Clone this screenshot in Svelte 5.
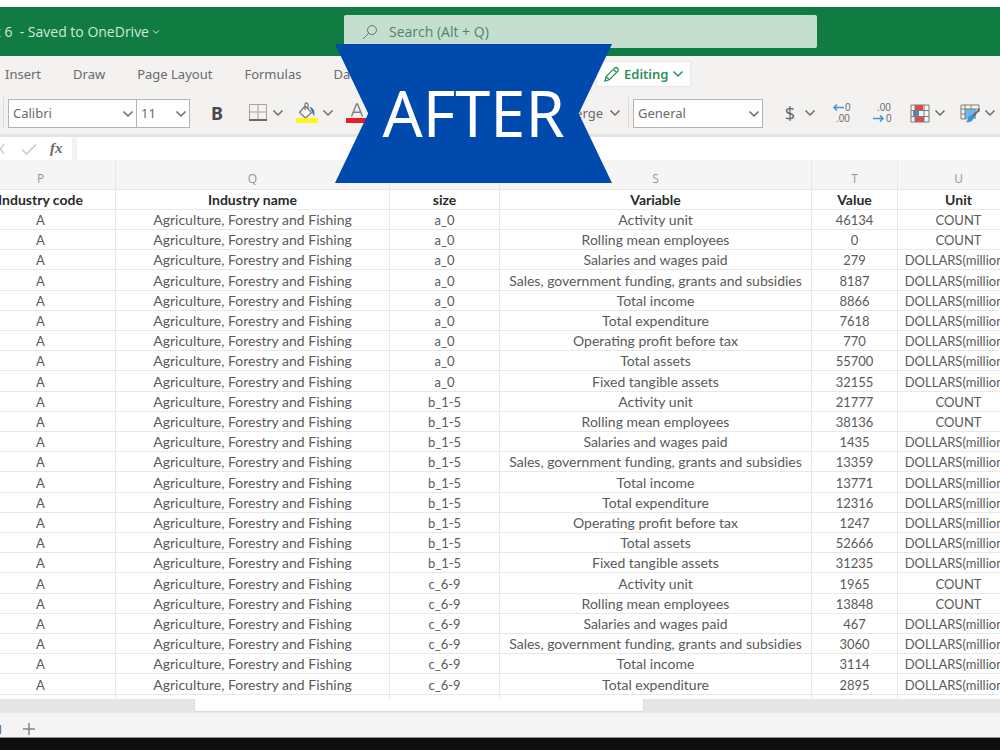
<script lang="ts">
    const tabs = ["Insert", "Draw", "Page Layout", "Formulas", "Data"]

    const columns = [
        { letter: "P", title: "Industry code" },
        { letter: "Q", title: "Industry name" },
        { letter: "R", title: "size" },
        { letter: "S", title: "Variable" },
        { letter: "T", title: "Value" },
        { letter: "U", title: "Unit" }
    ]

    const variables = [
        "Activity unit",
        "Rolling mean employees",
        "Salaries and wages paid",
        "Sales, government funding, grants and subsidies",
        "Total income",
        "Total expenditure",
        "Operating profit before tax",
        "Total assets",
        "Fixed tangible assets"
    ]

    const sizes = ["a_0", "b_1-5", "c_6-9"]

    const values = [
        46134, 0, 279, 8187, 8866, 7618, 770, 55700, 32155,
        21777, 38136, 1435, 13359, 13771, 12316, 1247, 52666, 31235,
        1965, 13848, 467, 3060, 3114, 2895
    ]

    // every size goes through the same nine variables, the first two are counts
    const rows = values.map((value, i) => {
        const n = i % variables.length
        return {
            size: sizes[Math.floor(i / variables.length)],
            variable: variables[n],
            value,
            unit: n < 2 ? "COUNT" : "DOLLARS(millions)"
        }
    })
</script>

{#snippet chevron()}
    <svg class="chevron" viewBox="0 0 12 8" aria-hidden="true"><path d="M1.500 1.500 L6 6 L10.500 1.500" /></svg>
{/snippet}

<div class="app">
    <header class="titlebar">
        <div class="doc">
            <button class="doc-name">Cost 6&nbsp; - Saved to OneDrive
                <svg class="small-chevron" viewBox="0 0 12 8" aria-hidden="true"><path d="M1.500 1.500 L6 6 L10.500 1.500" /></svg>
            </button>
        </div>
        <label class="search">
            <svg viewBox="0 0 16 16" aria-hidden="true"><circle cx="10" cy="6" r="4.500" /><path d="M6.700 9.300 L1 15" /></svg>
            <input type="search" placeholder="Search (Alt + Q)" aria-label="Search" />
        </label>
    </header>

    <div class="ribbon">
        <div class="tabs">
            <nav>
                {#each tabs as tab}
                    <button>{tab}</button>
                {/each}
            </nav>
            <button class="editing">
                <svg viewBox="0 0 18 18" aria-hidden="true"><path d="M2 16 L3.300 11.200 L12.500 2 Q14 1 15.400 2.400 Q17 4 15.800 5.400 L6.700 14.600 Z M11 3.600 L14.300 6.900 M3.500 11.300 L6.600 14.400" /></svg>
                Editing
                {@render chevron()}
            </button>
        </div>

        <div class="tools">
            <div class="group left">
                <div class="select font">
                    <select aria-label="Font"><option>Calibri</option></select>
                    {@render chevron()}
                </div>
                <div class="select font-size">
                    <select aria-label="Font size"><option>11</option></select>
                    {@render chevron()}
                </div>
                <div class="icons">
                    <button class="bold" aria-label="Bold">B</button>
                    <button aria-label="Borders">
                        <svg class="icon" viewBox="0 0 20 20">
                            <path d="M1.500 16 V1.500 H18.500 V16 M10 1.500 V16 M1.500 9 H18.500" fill="none" stroke="#a5a4a3" />
                            <path d="M1 17 H19" stroke="#6c6b6a" stroke-width="2" />
                        </svg>
                        {@render chevron()}
                    </button>
                    <button aria-label="Fill color">
                        <svg class="icon wide" viewBox="0 0 22 22">
                            <path d="M9 4 L15.500 10.500 L9.500 16 L3.500 10.500 Z M9 8 V2.500 Q9 1 10.500 1 Q12 1 12 3 V7" fill="#f8f8f8" stroke="#7d7c7b" stroke-width="1.300" />
                            <path d="M13.500 5 Q19 5.500 18.500 14 Q16.500 13 16 9.500 Z" fill="#3474b5" />
                            <rect y="16" width="22" height="5" rx="1" fill="#fdf51c" />
                        </svg>
                        {@render chevron()}
                    </button>
                    <button aria-label="Font color">
                        <svg class="icon wide" viewBox="0 0 22 22">
                            <path d="M5.500 14.500 L10.500 2 H11.500 L16.500 14.500 M7.300 10.300 H14.700" fill="none" stroke="#7d7c7b" stroke-width="1.400" />
                            <rect y="16" width="22" height="5" fill="#ec1c24" />
                        </svg>
                    </button>
                </div>
                <button class="merge">Merge {@render chevron()}</button>
            </div>

            <div class="group right">
                <div class="select format">
                    <select aria-label="Number format"><option>General</option></select>
                    {@render chevron()}
                </div>
                <div class="icons">
                    <button aria-label="Currency"><span class="dollar">$</span>{@render chevron()}</button>
                    <button class="plain" aria-label="Increase decimal">
                        <svg class="icon" viewBox="0 0 20 20">
                            <path d="M11 4.500 H1 M4 1.500 L1 4.500 L4 7.500" fill="none" stroke="#3f95d6" stroke-width="1.500" />
                            <text x="12" y="8">0</text>
                            <text x="3" y="19">.00</text>
                        </svg>
                    </button>
                    <button class="plain" aria-label="Decrease decimal">
                        <svg class="icon" viewBox="0 0 20 20">
                            <text x="4" y="8">.00</text>
                            <path d="M0 15.500 H10 M7 12.500 L10 15.500 L7 18.500" fill="none" stroke="#3f95d6" stroke-width="1.500" />
                            <text x="13" y="19">0</text>
                        </svg>
                    </button>
                    <button aria-label="Conditional formatting">
                        <svg class="icon" viewBox="0 0 20 20">
                            <rect x="1" y="2" width="18" height="17" fill="#f4f4f4" />
                            <rect x="5" y="2" width="8" height="6" fill="#e2484b" />
                            <rect x="3" y="8" width="6" height="5" fill="#4d87c7" />
                            <rect x="5" y="13" width="9" height="6" fill="#e2484b" />
                            <path d="M1 2 H19 V19 H1 Z M1 7.500 H19 M1 13.500 H19 M5 2 V19 M14 2 V19" fill="none" stroke="#7d7c7b" />
                        </svg>
                        {@render chevron()}
                    </button>
                    <button aria-label="Format as table">
                        <svg class="icon" viewBox="0 0 20 20">
                            <rect x="1" y="2" width="18" height="14" fill="#f4f4f4" />
                            <rect x="5" y="6" width="11" height="10" fill="#70b5e8" />
                            <path d="M1 16 V2 H19 V9 M1 6 H19 M1 11 H5 M5 2 V16 M11 2 V6 M1 16 H6" fill="none" stroke="#7d7c7b" />
                            <path d="M19.500 5 L11 13 L13 15 L20 7 Z" fill="#6d6c6b" />
                            <path d="M11 12.500 Q14 13 13.500 15.500 Q12 20 5.500 19 Q8 18 8 15 Q9 12.500 11 12.500 Z" fill="#3e94d8" />
                        </svg>
                        {@render chevron()}
                    </button>
                </div>
            </div>
        </div>
    </div>

    <div class="formula">
        <div class="formula-tools">
            <button aria-label="Cancel"><svg viewBox="0 0 16 12"><path d="M5 1 L12 11 M12 1 L5 11" /></svg></button>
            <button aria-label="Enter"><svg viewBox="0 0 16 12"><path d="M1 6.500 L5.500 11 L15 1.500" /></svg></button>
            <button class="fx">fx</button>
        </div>
        <input type="text" aria-label="Formula" />
    </div>

    <main class="sheet">
        <table>
            <colgroup>
                <col class="code" />
                <col class="name" />
                <col class="size" />
                <col />
                <col class="value" />
                <col class="unit" />
            </colgroup>
            <thead>
                <tr>
                    {#each columns as column}
                        <th>{column.letter}</th>
                    {/each}
                </tr>
            </thead>
            <tbody>
                <tr class="titles">
                    {#each columns as column}
                        <td>{column.title}</td>
                    {/each}
                </tr>
                {#each rows as row}
                    <tr>
                        <td>A</td>
                        <td class="words">Agriculture, Forestry and Fishing</td>
                        <td>{row.size}</td>
                        <td class="words">{row.variable}</td>
                        <td>{row.value}</td>
                        <td>{row.unit}</td>
                    </tr>
                {/each}
                <tr class="last"><td></td><td></td><td></td><td></td><td></td><td></td></tr>
            </tbody>
        </table>
    </main>

    <div class="scrollbar"><div class="thumb"></div></div>

    <footer>
        <button class="sheet-tab">Sheet1</button>
        <button class="add" aria-label="New sheet">
            <svg viewBox="0 0 12 12"><path d="M6 0 V12 M0 6 H12" /></svg>
        </button>
    </footer>
    <div class="taskbar"></div>

    <div class="banner">AFTER</div>
</div>

<style>
    :global(body) {
        margin: 0;
        background: #fff;
    }

    .app {
        position: relative;
        display: flex;
        flex-direction: column;
        min-height: 100vh;
        overflow: hidden;
        box-sizing: border-box;
        padding-top: 7px;
        font-family: "Noto Sans", "Open Sans", sans-serif;
        font-size: 13px;
        color: #6b6a69;
    }

    button, input, select {
        font: inherit;
        color: inherit;
        margin: 0;
        padding: 0;
        border: 0;
        background: none;
        border-radius: 0;
        outline: none;
    }

    button {
        display: flex;
        align-items: center;
        flex-shrink: 0;
        white-space: nowrap;
    }

    svg {
        display: block;
        flex-shrink: 0;
    }

    .chevron, .small-chevron {
        width: 12px;
        height: 8px;
        fill: none;
        stroke: currentColor;
        stroke-width: 1.5;
    }

    .small-chevron {
        width: 8px;
        height: 6px;
        margin-left: 3px;
    }

    .titlebar {
        display: grid;
        grid-template-columns: 344px minmax(0, 473px) 1fr;
        align-items: center;
        height: 49px;
        background: #107c41;
        font-family: "Open Sans", sans-serif;
        font-size: 14px;
    }

    .doc {
        display: flex;
        justify-content: flex-end;
        width: 160px;
        overflow: hidden;
        color: #d3e8dc;
    }

    .search {
        display: flex;
        align-items: center;
        gap: 11px;
        height: 33px;
        padding-left: 18px;
        background: #c5decf;
        border-radius: 2px;
        color: #4b8767;
    }

    .search svg {
        width: 16px;
        height: 16px;
        fill: none;
        stroke: #4b8767;
    }

    .search input {
        flex: 1;
        min-width: 0;
    }

    .search input::placeholder {
        color: #4b8767;
        opacity: 1;
    }

    .ribbon {
        background: #f3f2f1;
        border-bottom: 3px solid #e4e3e2;
    }

    .tabs {
        display: flex;
        align-items: center;
        height: 36px;
    }

    nav {
        display: flex;
        gap: 32px;
        width: 591px;
        padding-left: 5px;
    }

    .editing {
        gap: 4px;
        height: 26px;
        padding: 0 6px;
        background: #fff;
        border: 1px solid #e8e8e7;
        box-sizing: border-box;
        font-weight: 600;
        color: #2b8f5c;
    }

    .editing svg:first-child {
        width: 17px;
        height: 17px;
        fill: none;
        stroke: #2b8f5c;
        stroke-width: 1.4;
    }

    .tools {
        display: flex;
        align-items: center;
        height: 42px;
    }

    .group, .icons {
        display: flex;
        align-items: center;
    }

    .left {
        width: 620px;
        height: 32px;
        margin-left: 3px;
        padding-left: 4px;
        border-left: 1px solid #dddcdb;
    }

    .left .icons {
        gap: 12px;
        margin-left: 16px;
    }

    .right {
        height: 32px;
        padding-left: 4px;
        border-left: 1px solid #dddcdb;
    }

    .right .icons {
        gap: 14px;
        margin-left: 17px;
    }

    .icons button {
        gap: 4px;
    }

    .icons .bold {
        justify-content: center;
        width: 22px;
        margin-right: 8px;
        font-size: 18px;
        font-weight: 700;
        color: #4b4a49;
    }

    .icons .plain {
        justify-content: center;
        width: 26px;
    }

    .icon {
        width: 20px;
        height: 20px;
        overflow: visible;
    }

    .icon.wide {
        width: 22px;
        height: 22px;
    }

    .icon text {
        font-family: "Liberation Sans", sans-serif;
        font-size: 10px;
        fill: #6b6a69;
    }

    .dollar {
        width: 20px;
        text-align: center;
        font-size: 18px;
    }

    .merge {
        gap: 6px;
        margin-left: auto;
        margin-right: 7px;
    }

    .select {
        position: relative;
        box-sizing: border-box;
        height: 29px;
        border: 1px solid #b5b4b3;
        background: #fff;
    }

    .select select {
        appearance: none;
        width: 100%;
        height: 100%;
        padding-left: 4px;
    }

    .select .chevron {
        position: absolute;
        right: 2px;
        top: 10px;
        pointer-events: none;
    }

    .font {
        width: 129px;
    }

    .font-size {
        width: 53px;
        border-left: 0;
    }

    .format {
        width: 130px;
    }

    .formula {
        display: flex;
        height: 23px;
        background: #f3f3f3;
    }

    .formula-tools {
        display: flex;
        align-items: center;
        gap: 13px;
        box-sizing: border-box;
        width: 72px;
        margin-right: 5px;
        background: #fff;
    }

    .formula-tools button:first-child {
        margin-left: -8px;
    }

    .formula-tools svg {
        width: 16px;
        height: 12px;
        fill: none;
        stroke: #c4c4c4;
        stroke-width: 1.3;
    }

    .formula-tools .fx {
        font-family: "Liberation Serif", serif;
        font-size: 15px;
        font-style: italic;
        font-weight: 700;
    }

    .formula input {
        flex: 1;
        min-width: 0;
        background: #fff;
    }

    .sheet {
        flex: 1;
        overflow: hidden;
    }

    table {
        table-layout: fixed;
        width: calc(100% + 54px);
        margin-left: -34px;
        border-collapse: separate;
        border-spacing: 0;
        font-family: Lato, sans-serif;
        color: #5a5a5a;
    }

    .code { width: 150px; }
    .name { width: 274px; }
    .size { width: 110px; }
    .value { width: 86px; }
    .unit { width: 122px; }

    th, td {
        box-sizing: border-box;
        padding: 0;
        border-right: 1px solid #e8e8e8;
        border-bottom: 1px solid #e8e8e8;
        text-align: center;
        white-space: nowrap;
    }

    th {
        height: 30px;
        padding-top: 8px;
        background: #f5f5f5;
        font-family: "Open Sans", sans-serif;
        font-size: 12px;
        font-weight: 400;
        color: #969696;
    }

    td {
        height: 20px;
        padding-top: 2px;
        line-height: 17px;
    }

    /* row heights round up now and then, as they do on a zoomed sheet */
    tbody tr:nth-child(5n) td {
        height: 21px;
    }

    .words {
        padding-top: 0;
        font-size: 14px;
    }

    .titles td {
        padding-top: 0;
        font-size: 14px;
        font-weight: 700;
        color: #2a2a2a;
    }

    tbody .last td {
        height: 4px;
        border-bottom: 0;
    }

    .scrollbar {
        height: 14px;
        background: #e6e6e6;
    }

    .thumb {
        width: 45%;
        height: 13px;
        margin-left: 194px;
        background: #fff;
        border: 1px solid #dcdcdc;
        border-top: 0;
        box-sizing: border-box;
    }

    footer {
        display: flex;
        align-items: center;
        gap: 20px;
        box-sizing: border-box;
        height: 25px;
        padding-top: 8px;
        background: #f4f4f4;
        border-bottom: 1px solid #8f8f8f;
    }

    .sheet-tab {
        justify-content: flex-end;
        width: 3px;
        overflow: hidden;
        font-weight: 700;
    }

    .add svg {
        width: 12px;
        height: 12px;
        stroke: #858585;
        stroke-width: 1.5;
    }

    .taskbar {
        height: 12px;
        background: #0d0d0d;
    }

    .banner {
        position: absolute;
        top: 44px;
        left: 335px;
        display: flex;
        align-items: center;
        justify-content: center;
        box-sizing: border-box;
        width: 277px;
        height: 139px;
        padding-bottom: 2px;
        background: #004aad;
        clip-path: polygon(0 0, 100% 0, 88% 50%, 100% 100%, 0 100%, 12% 50%);
        font-size: 63px;
        color: #fff;
    }
</style>
